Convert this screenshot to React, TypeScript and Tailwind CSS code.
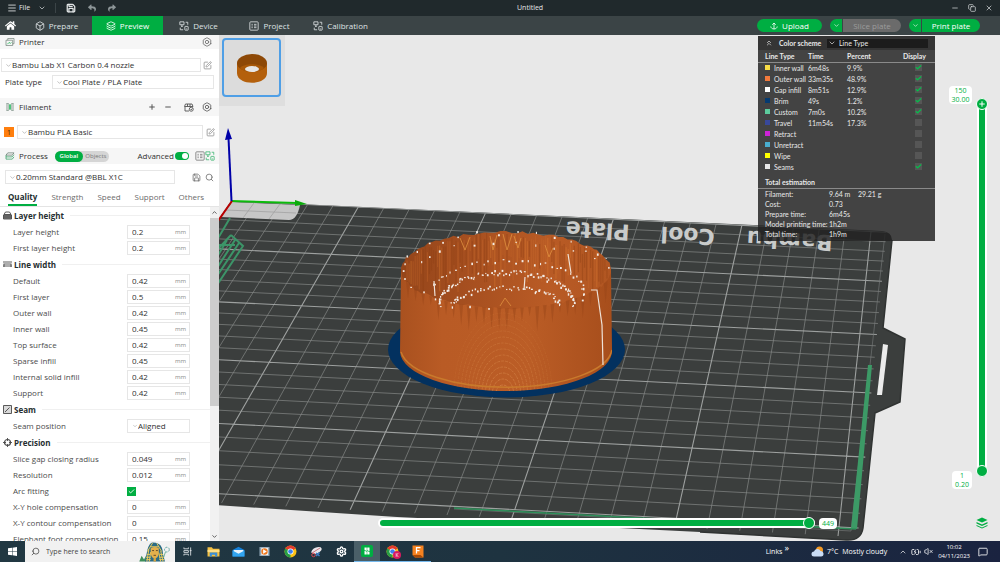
import type { ReactNode } from 'react';
import {
  BatteryCharging,
  Bolt,
  Box,
  Check,
  ChevronDown,
  ChevronsUp,
  ChevronUp,
  Copy,
  Layers,
  Menu,
  MessageSquare,
  Minus,
  Plus,
  Save,
  Search,
  Settings,
  SquarePen,
  VolumeX,
  X,
} from 'lucide-react';
import { FaHome, FaReply, FaShare } from 'react-icons/fa';

type Point = [number, number];

const SECTIONS = [
  { title: 'Layer height', icon: 'layers', rows: [['Layer height', '0.2'], ['First layer height', '0.2']] },
  {
    title: 'Line width',
    icon: 'lines',
    rows: [
      ['Default', '0.42'],
      ['First layer', '0.5'],
      ['Outer wall', '0.42'],
      ['Inner wall', '0.45'],
      ['Top surface', '0.42'],
      ['Sparse infill', '0.45'],
      ['Internal solid infill', '0.42'],
      ['Support', '0.42'],
    ],
  },
  { title: 'Seam', icon: 'seam', rows: [['Seam position', 'Aligned']] },
  {
    title: 'Precision',
    icon: 'precision',
    rows: [
      ['Slice gap closing radius', '0.049'],
      ['Resolution', '0.012'],
      ['Arc fitting', 'on'],
      ['X-Y hole compensation', '0'],
      ['X-Y contour compensation', '0'],
      ['Elephant foot compensation', '0.15'],
    ],
  },
];

const LINE_TYPES = [
  { name: 'Inner wall', color: 'bg-[#f7dc45]', time: '6m48s', percent: '9.9%', shown: true },
  { name: 'Outer wall', color: 'bg-[#f47a3c]', time: '33m35s', percent: '48.9%', shown: true },
  { name: 'Gap infill', color: 'bg-white', time: '8m51s', percent: '12.9%', shown: true },
  { name: 'Brim', color: 'bg-[#053a70]', time: '49s', percent: '1.2%', shown: true },
  { name: 'Custom', color: 'bg-[#5ccb9c]', time: '7m0s', percent: '10.2%', shown: true },
  { name: 'Travel', color: 'bg-[#38489b]', time: '11m54s', percent: '17.3%', shown: false },
  { name: 'Retract', color: 'bg-[#cd22d6]', time: '', percent: '', shown: false },
  { name: 'Unretract', color: 'bg-[#49adcf]', time: '', percent: '', shown: false },
  { name: 'Wipe', color: 'bg-[#ffff00]', time: '', percent: '', shown: false },
  { name: 'Seams', color: 'bg-[#e6e6e6]', time: '', percent: '', shown: true },
];

const TOTALS = [
  ['Filament:', '9.64 m', '29.21 g'],
  ['Cost:', '0.73', ''],
  ['Prepare time:', '6m45s', ''],
  ['Model printing time:', '1h2m', ''],
  ['Total time:', '1h9m', ''],
];

/* ---------- top bars ---------- */

function ListIcon() {
  return (
    <svg viewBox="0 0 24 24" className="size-[10px]" fill="none" stroke="currentColor" strokeWidth="2">
      <rect x="2" y="2" width="20" height="20" rx="2" />
      <path d="M6 8h3M12 8h6M6 12h3M12 12h6M6 16h3M12 16h6" />
    </svg>
  );
}

function DeviceIcon() {
  return (
    <svg viewBox="0 0 24 24" className="size-[10px]" fill="none" stroke="currentColor" strokeWidth="2">
      <path d="M2 2h10v7H2zM5 13h4M7 9v4" />
      <rect x="14" y="13" width="8" height="9" rx="1" />
      <path d="M16 3h5v6M3 16v5h7M17 19h2" />
    </svg>
  );
}

function TitleBar() {
  return (
    <header className="relative flex h-4 shrink-0 items-center bg-[#20292c] px-[7px] text-[#e4e7e8]">
      <button className="flex items-center gap-0.5 text-[7px]">
        <Menu className="size-[10px]" />
        File
      </button>
      <button aria-label="File options" className="ml-2">
        <ChevronDown className="size-2" />
      </button>
      <span className="ml-[9px] h-[10px] w-px bg-[#3b4447]" />
      <button aria-label="Save" className="ml-[10px]">
        <Save className="size-[10px]" strokeWidth={3} />
      </button>
      <button aria-label="Undo" className="ml-3 text-[#8d9698]">
        <FaReply className="size-2" />
      </button>
      <button aria-label="Redo" className="ml-3 text-[#8d9698]">
        <FaShare className="size-2" />
      </button>
      <h1 className="absolute left-1/2 top-0.5 ml-[17px] text-[7px] leading-3">Untitled</h1>
      <div className="ml-auto flex items-center gap-[9px]">
        <button aria-label="Minimize"><Minus className="size-2" /></button>
        <button aria-label="Restore"><Copy className="size-2" /></button>
        <button aria-label="Close"><X className="size-2" /></button>
      </div>
    </header>
  );
}

function NavTab({ label, icon, active }: { label: string; icon: ReactNode; active?: boolean }) {
  return (
    <button
      className={
        active
          ? 'flex w-[71px] items-center justify-center gap-1 bg-[#00ae42] text-white'
          : 'flex w-[71px] items-center justify-center gap-1 text-[#dfe3e4]'
      }
    >
      {icon}
      {label}
    </button>
  );
}

function SplitButton({ label, disabled }: { label: string; disabled?: boolean }) {
  return (
    <div className="flex h-[13px] w-[71px] gap-px overflow-hidden rounded-full">
      <button aria-label={label + ' options'} className="flex w-3 items-center justify-center bg-[#00ae42] text-white">
        <ChevronDown className="size-[7px]" />
      </button>
      <button
        disabled={disabled}
        className={disabled ? 'flex-1 bg-[#6b6b6b] text-[#9c9c9c]' : 'flex-1 bg-[#00ae42] text-white'}
      >
        {label}
      </button>
    </div>
  );
}

function NavBar() {
  return (
    <nav className="flex h-[19px] shrink-0 bg-[#3b4446] text-[8px] leading-3">
      <button aria-label="Home" className="flex w-[21px] items-center justify-center text-white">
        <FaHome className="size-[11px]" />
      </button>
      <NavTab label="Prepare" icon={<Box className="size-[10px]" />} />
      <NavTab label="Preview" icon={<Layers className="size-[10px]" />} active />
      <NavTab label="Device" icon={<DeviceIcon />} />
      <NavTab label="Project" icon={<ListIcon />} />
      <NavTab label="Calibration" icon={<DeviceIcon />} />
      <div className="ml-auto flex items-center gap-2 pr-5">
        <button className="flex h-[13px] w-[65px] items-center justify-center gap-1 rounded-full bg-[#00ae42] text-white">
          <svg viewBox="0 0 16 16" className="size-2" fill="none" stroke="currentColor" strokeWidth="1.6">
            <path d="M8 14V2M4.500 5.500L8 2l3.500 3.500M1.500 9c.5 3 3 5 6.500 5s6-2 6.500-5" />
          </svg>
          Upload
        </button>
        <SplitButton label="Slice plate" disabled />
        <SplitButton label="Print plate" />
      </div>
    </nav>
  );
}

/* ---------- sidebar ---------- */

function Dropdown({ label, value, className }: { label: string; value: string; className: string }) {
  return (
    <div className={'relative flex h-[14px] items-center border border-[#e6e6e6] bg-white ' + className}>
      <ChevronDown className="pointer-events-none absolute left-[3px] size-[7px] text-[#9a9a9a]" />
      <select aria-label={label} className="h-3 w-full appearance-none bg-transparent pl-[10px] text-[8px] leading-3 outline-none">
        <option>{value}</option>
      </select>
    </div>
  );
}

function SectionIcon({ kind }: { kind: string }) {
  return (
    <svg viewBox="0 0 18 18" className="size-[9px] shrink-0" fill="none" stroke="#4a4a4a" strokeWidth="1.8">
      {kind === 'layers' && (
        <>
          <path d="M2 7l3-5h8l3 5z" />
          <path d="M1 8h16v8H1z" fill="#777" />
          <path d="M1 12h16" />
        </>
      )}
      {kind === 'lines' && <path d="M0 4h18M1 8h16M2 8v6M16 8v6M0 12h18" />}
      {kind === 'seam' && (
        <>
          <path d="M1 1h16v16H1z" fill="#d9d9d9" />
          <path d="M4 14L13 5" />
        </>
      )}
      {kind === 'precision' && (
        <>
          <circle cx="9" cy="9" r="6" strokeWidth="2.400" />
          <path d="M9 0v6M9 12v6M0 9h6M12 9h6" />
        </>
      )}
    </svg>
  );
}

function Field({ label, value }: { label: string; value: string }) {
  const id = label.toLowerCase().replace(/\s/g, '-');
  return (
    <div className="flex h-4 items-center pl-[13px]">
      <label htmlFor={id} className="w-[114px] whitespace-nowrap text-[#4c4c4c]">{label}</label>
      {value === 'Aligned' && (
        <div className="relative flex h-[14px] w-[63px] items-center border border-[#e6e6e6]">
          <ChevronDown className="pointer-events-none absolute left-1 size-[6px] text-[#9a9a9a]" />
          <select id={id} className="h-3 w-full appearance-none bg-transparent pl-[10px] text-[8px] leading-3">
            <option>{value}</option>
          </select>
        </div>
      )}
      {value === 'on' && (
        <span className="relative grid size-[9px] place-items-center">
          <input id={id} type="checkbox" defaultChecked className="absolute inset-0 appearance-none bg-[#00ae42]" />
          <Check className="pointer-events-none relative size-[7px] text-white" strokeWidth={3} />
        </span>
      )}
      {value !== 'Aligned' && value !== 'on' && (
        <div className="flex h-[14px] w-[63px] items-center border border-[#e6e6e6] pl-1 pr-[3px]">
          <input id={id} defaultValue={value} className="h-3 w-full min-w-0 text-[8px] leading-3 outline-none" />
          <span className="text-[6px] leading-[10px] text-[#8a8a8a]">mm</span>
        </div>
      )}
    </div>
  );
}

function Sidebar() {
  return (
    <aside className="flex w-[219px] shrink-0 flex-col overflow-hidden bg-white text-[8px] leading-3 text-[#303030]">
      <div className="flex h-[14px] shrink-0 items-center bg-[#f6f6f6] pl-[5px] pr-[7px]">
        <svg viewBox="0 0 20 18" className="mr-1 h-2 w-[10px]" fill="none" stroke="#6f7f76" strokeWidth="1.6">
          <path d="M5 5V1h14v12h-3" />
          <path d="M1 5h15v12H1z" />
          <path d="M4 14l4-4 3 2 2-2" stroke="#00ae42" />
        </svg>
        <h2>Printer</h2>
        <button aria-label="Printer settings" className="ml-auto text-[#6b6b6b]">
          <Bolt className="size-[10px]" />
        </button>
      </div>
      <div className="mt-[9px] flex shrink-0 items-center gap-0.5 pl-px">
        <Dropdown label="Printer preset" value="Bambu Lab X1 Carbon 0.4 nozzle" className="w-[200px]" />
        <button aria-label="Edit printer" className="text-[#8a8a8a]">
          <SquarePen className="size-[9px]" />
        </button>
      </div>
      <div className="mt-[3px] flex shrink-0 items-center pl-[5px]">
        <span className="w-[47px]">Plate type</span>
        <Dropdown label="Plate type" value="Cool Plate / PLA Plate" className="w-[162px]" />
      </div>

      <div className="mt-[9px] flex h-[18px] shrink-0 items-center bg-[#f6f6f6] pl-[5px] pr-[7px]">
        <svg viewBox="0 0 20 18" className="mr-1 h-2 w-[10px]" fill="none" stroke="#7f9388" strokeWidth="1.600">
          <path d="M2 1h5M2 17h5M3 1v16M6 1v16M13 1h5M13 17h5M14 1v16M17 1v16" />
          <path d="M9 3v12M11 3v12" stroke="#00ae42" />
        </svg>
        <h2>Filament</h2>
        <div className="ml-auto flex items-center gap-2 text-[#555]">
          <button aria-label="Add filament"><Plus className="size-2" strokeWidth={3} /></button>
          <button aria-label="Remove filament"><Minus className="size-2" strokeWidth={3} /></button>
          <button aria-label="Sync filament" className="ml-1">
            <svg viewBox="0 0 20 18" className="h-[9px] w-[10px]" fill="none" stroke="currentColor" strokeWidth="1.800">
              <path d="M1 7h17M1 7l2-5h13l2 5M2 7v9h8M7 2v5M12 2v5" />
              <circle cx="14.500" cy="12.500" r="4" />
              <path d="M13 13l1.500 1 2-3" />
            </svg>
          </button>
          <button aria-label="Filament settings"><Bolt className="size-[10px]" /></button>
        </div>
      </div>
      <div className="mt-[9px] flex shrink-0 items-center pl-1">
        <span className="grid size-[10px] place-items-center bg-[#ff7f0e] text-[7px] text-[#4a2a08]">1</span>
        <Dropdown label="Filament preset" value="Bambu PLA Basic" className="ml-[3px] w-[186px]" />
        <button aria-label="Edit filament" className="ml-[3px] text-[#8a8a8a]">
          <SquarePen className="size-[9px]" />
        </button>
      </div>

      <div className="mt-[9px] flex h-4 shrink-0 items-center bg-[#f6f6f6] pl-[5px] pr-1">
        <svg viewBox="0 0 20 18" className="mr-1 h-2 w-[10px]" fill="none" stroke="#5f7468" strokeWidth="1.600">
          <path d="M5 2h14l-4 5H1z" />
          <path d="M1 11h14l4-5M1 16h14l4-5M1 7v9" stroke="#2a9a5a" />
        </svg>
        <h2>Process</h2>
        <div className="ml-[7px] flex h-[11px] w-[54px] items-center rounded-full bg-[#d5d5d5] text-[6px] leading-[11px]">
          <button className="h-[11px] w-[28px] rounded-full bg-[#00ae42] font-semibold text-white">Global</button>
          <button className="flex-1 text-[#777]">Objects</button>
        </div>
        <label htmlFor="advanced" className="ml-auto">Advanced</label>
        <span className="relative ml-px flex h-2 w-[14px] items-center justify-end rounded-full bg-[#00ae42] pr-px">
          <input id="advanced" type="checkbox" role="switch" defaultChecked className="absolute inset-0 appearance-none" />
          <span className="size-[6px] rounded-full bg-white" />
        </span>
        <button aria-label="Parameter list" className="ml-[6px] text-[#777]"><ListIcon /></button>
        <button aria-label="Compare presets" className="text-[#43b876]"><DeviceIcon /></button>
      </div>
      <div className="mt-[6px] flex shrink-0 items-center pl-[5px]">
        <Dropdown label="Process preset" value="0.20mm Standard @BBL X1C" className="w-[170px]" />
        <button aria-label="Save preset" className="ml-[17px] text-[#666]"><Save className="size-[9px]" /></button>
        <button aria-label="Search settings" className="ml-[4px] text-[#666]"><Search className="size-[9px]" /></button>
      </div>
      <div className="mt-[6px] flex h-[17px] shrink-0 gap-[14px] border-b border-[#e4e4e4] px-2 text-[#6b6b6b]">
        <button className="h-4 border-b-2 border-[#00ae42] font-bold text-[#262e30]">Quality</button>
        <button className="h-[14px]">Strength</button>
        <button className="h-[14px]">Speed</button>
        <button className="h-[14px]">Support</button>
        <button className="h-[14px]">Others</button>
      </div>

      <div className="flex min-h-0 flex-1">
        <div className="min-w-0 flex-1 overflow-hidden">
          {SECTIONS.map((section) => (
            <section key={section.title}>
              <div className="flex h-[17px] items-center gap-0.5 pl-[3px]">
                <SectionIcon kind={section.icon} />
                <h3 className="font-bold text-[#262e30]">{section.title}</h3>
                <span className="ml-1 h-px flex-1 bg-[#f0f0f0]" />
              </div>
              {section.rows.map(([label, value]) => (
                <Field key={label} label={label} value={value} />
              ))}
            </section>
          ))}
        </div>
        <div className="flex w-[9px] flex-col items-center bg-[#f1f1f1] text-[#505050]">
          <ChevronUp className="my-0.5 size-[7px]" strokeWidth={3} />
          <span className="h-[188px] w-full bg-[#cdcdcd]" />
          <ChevronDown className="mb-px mt-auto size-[7px]" strokeWidth={3} />
        </div>
      </div>
    </aside>
  );
}

/* ---------- build plate and model ---------- */

// back-left, back-right, front-right and front-left corners of the 250mm grid
const CORNERS: Point[] = [[231.7, 201], [871, 231.5], [839, 527], [36, 484]];

function makeProjection([p0, p1, p2, p3]: Point[]) {
  const dx1 = p1[0] - p2[0];
  const dx2 = p3[0] - p2[0];
  const dy1 = p1[1] - p2[1];
  const dy2 = p3[1] - p2[1];
  const sx = p0[0] - p1[0] + p2[0] - p3[0];
  const sy = p0[1] - p1[1] + p2[1] - p3[1];
  const det = dx1 * dy2 - dx2 * dy1;
  const g = (sx * dy2 - dx2 * sy) / det;
  const h = (dx1 * sy - sx * dy1) / det;
  return (x: number, y: number): Point => {
    const u = x / 250;
    const v = y / 250;
    const w = g * u + h * v + 1;
    return [
      ((p1[0] - p0[0] + g * p1[0]) * u + (p3[0] - p0[0] + h * p3[0]) * v + p0[0]) / w,
      ((p1[1] - p0[1] + g * p1[1]) * u + (p3[1] - p0[1] + h * p3[1]) * v + p0[1]) / w,
    ];
  };
}

const project = makeProjection(CORNERS);

function gridPath(major: boolean) {
  let d = '';
  for (let mm = 0; mm <= 250; mm += 10) {
    if ((mm % 50 === 0) !== major) continue;
    const ends = [project(mm, 0), project(mm, 256), project(0, mm), project(256, mm)];
    d += `M${ends[0]}L${ends[1]}M${ends[2]}L${ends[3]}`;
  }
  return d;
}

// repeatable noise, so the model looks the same on each render
const noise = (n: number) => {
  const s = Math.sin(n * 127.1) * 43758.5453;
  return s - Math.floor(s);
};

function rimPath() {
  let d = '';
  for (let deg = 0; deg < 360; deg += 3) {
    const a = (deg * Math.PI) / 180;
    const x = 506 + 105 * Math.cos(a);
    const y = 270 + 38 * Math.sin(a) + (noise(deg) - 0.5) * 3;
    d += `${deg ? 'L' : 'M'}${x.toFixed(1)},${y.toFixed(1)}`;
  }
  return d + 'Z';
}

function dotArc(cx: number, cy: number, rx: number, ry: number, from: number, to: number, step: number) {
  const dots: Point[] = [];
  for (let deg = from; deg <= to; deg += step) {
    const a = (deg * Math.PI) / 180;
    dots.push([
      cx + rx * Math.cos(a) + (noise(deg + rx) - 0.5) * 3,
      cy + ry * Math.sin(a) + (noise(deg * 2 + rx) - 0.5) * 5,
    ]);
  }
  return dots;
}

const SEAM_DOTS = [
  ...dotArc(506, 303, 67, 31, 178, 362, 2),
  ...dotArc(506, 306, 53, 19, 185, 355, 3),
  ...dotArc(508, 290, 75, 29, 190, 375, 5),
  ...dotArc(508, 264, 88, 22, 190, 350, 14),
  ...dotArc(506, 270, 104, 38, 100, 358, 11),
];

const INNER_STREAKS = Array.from({ length: 100 }, (_, i) => {
  const x = 405 + i * 2.04;
  const edge = 38 * Math.sqrt(Math.max(0, 1 - ((x - 506) / 105) ** 2));
  const top = 270 - edge + noise(i) * 10;
  const bottom = Math.min(268 + edge, top + 10 + noise(i + 40) * 40);
  return { x, top, bottom, tone: noise(i + 90) };
});

const FRONT_TEETH = Array.from({ length: 27 }, (_, i) => {
  const x = 408 + i * 7.600;
  const edge = 38 * Math.sqrt(Math.max(0, 1 - ((x - 506) / 105) ** 2));
  return { x, y: 264 + edge, len: 14 + noise(i + 7) * 18 };
});

const PLATE =
  'M231 201L882 231Q892 232 892 240L883 328L905 339L900 402L875 413L863 528Q861 541 846 540L700 532L397 517L200 504L36 484Z';

function Scene() {
  return (
    <svg
      viewBox="219 35 781 506"
      preserveAspectRatio="xMidYMid slice"
      className="absolute inset-0 size-full"
      role="img"
      aria-label="Sliced model on the build plate"
    >
      <defs>
        <linearGradient id="wall">
          <stop offset="0" stopColor="#a9511f" />
          <stop offset="0.2" stopColor="#b95b25" />
          <stop offset="0.6" stopColor="#bb5d26" />
          <stop offset="1" stopColor="#a74e1c" />
        </linearGradient>
        <linearGradient id="inside">
          <stop offset="0" stopColor="#94451a" />
          <stop offset="0.35" stopColor="#a85020" />
          <stop offset="0.7" stopColor="#b95b25" />
          <stop offset="1" stopColor="#b15622" />
        </linearGradient>
        <clipPath id="plate-clip"><path d={PLATE} /></clipPath>
        <clipPath id="wall-clip">
          <path d="M401 270L400 352A106 40 0 0 0 612 350L611 270A105 38 0 0 1 401 270Z" />
        </clipPath>
      </defs>
      <rect x="-400" y="-300" width="2000" height="1200" fill="#e8e8e8" />
      <path d={PLATE} fill="#3b3e3d" />
      <path d="M892 240L883 328L905 339L900 402L875 413L863 528Q861 541 846 540L700 532" fill="none" stroke="#303332" strokeWidth="1.5" />
      <path d="M883 344L888 345L882 395L877 395Z" fill="#ececec" />
      <g clipPath="url(#plate-clip)" fill="none">
        <path d={gridPath(false)} stroke="#858887" strokeWidth="0.700" />
        <path d={gridPath(true)} stroke="#9da09f" strokeWidth="1.100" />
        <path d="M885 234L851 531L454 509" stroke="#7b7e7d" strokeWidth="0.600" />
      </g>
      <g fill="#c9cbca" fontFamily="DejaVu Sans" fontSize="22" fontWeight="bold" textAnchor="middle">
        <text transform="translate(598 223) rotate(183)">Plate</text>
        <text transform="translate(688 228) rotate(183)">Cool</text>
        <text transform="translate(790 233) rotate(183)">Bambu</text>
      </g>
      {/* purge lines */}
      <g fill="none" stroke="#3c9468" strokeWidth="2">
        <path d="M230 218L217 240M231 235L243 246L217 285M217 250L231 235M235 240L217 268M239 243L217 276M227 240L217 257M217 245L235 245" />
      </g>
      <path d="M868 365L872 365L857 529L851 529Z" fill="#3c9a66" />
      <path d="M454 508L640 518L856 529" fill="none" stroke="#2f8f5a" strokeWidth="1.500" />
      {/* origin */}
      <path d="M232 202L300 205Q297 220 289 220L221 217Z" fill="#c6c6c6" />
      <path d="M226 210L296 213M254 203L243 218M280 204L269 219" stroke="#a2a2a2" strokeWidth="0.800" />
      <path d="M231 201L297 203" stroke="#0cba0c" strokeWidth="2" />
      <path d="M295 200L307 204L295 206Z" fill="#0cab0c" />
      <path d="M232 201L218 221" stroke="#b80000" strokeWidth="2" />
      <path d="M231.500 201L228.500 138" stroke="#0000a8" strokeWidth="2" />
      <path d="M225 140L228 128L232 139Z" fill="#0000a8" />

      {/* model */}
      <ellipse cx="506.500" cy="349.500" rx="118.500" ry="48" fill="#03315f" />
      <path d="M401 270L400 352A106 40 0 0 0 612 350L611 270Z" fill="url(#wall)" />
      <path d={rimPath()} fill="url(#inside)" />
      {INNER_STREAKS.map((s) => (
        <path
          key={s.x}
          d={`M${s.x} ${s.top}V${s.bottom}`}
          stroke={s.tone > 0.8 ? '#d97a30' : s.tone > 0.4 ? '#8f4014' : '#c4662a'}
          strokeWidth="1.200"
          opacity="0.400"
        />
      ))}
      <g clipPath="url(#wall-clip)">
        {FRONT_TEETH.map((t) => (
          <path key={t.x} d={`M${t.x - 2.5} ${t.y}L${t.x} ${t.y + t.len}L${t.x + 2.5} ${t.y}Z`} fill="#964418" opacity="0.450" />
        ))}
        {Array.from({ length: 13 }, (_, i) => (
          <ellipse
            key={i}
            cx="503"
            cy="393"
            rx={7 + i * 3.500}
            ry={8 + i * 6}
            fill="none"
            stroke="#dc9052"
            strokeWidth="0.800"
            strokeDasharray="3 1"
            opacity={0.7 - i * 0.045}
          />
        ))}
        <path d="M401 352A106 40 0 0 0 612 350" fill="none" stroke="#c97a2c" strokeWidth="1.500" />
      </g>
      <path d="M460 238l5 12 5-13M490 236l3 14 4-15M503 234l4 16 5-16M514 236l4 12 3-10M545 245l4 12 4-9M500 306l5-8 6 8" fill="none" stroke="#e09040" strokeWidth="0.800" />
      <g fill="#f3ece6">
        {SEAM_DOTS.map(([x, y], i) => (
          <rect key={i} x={x} y={y} width={1 + noise(i + 3)} height={1 + noise(i) * 1.500} />
        ))}
      </g>
      <path d="M568 254L571 273M525 277L524 290M434 281L435 296" stroke="#eee2d8" strokeWidth="1.200" />
      <path d="M591 290L597 290L602 325L603 365" fill="none" stroke="#eee2d8" strokeWidth="1.200" />
    </svg>
  );
}

/* ---------- viewport overlays ---------- */

function PlateThumbnail() {
  return (
    <div className="absolute left-0 top-0 h-[71px] w-[66px] bg-[#dedede] p-[3px]">
      <button aria-label="Plate 1" className="grid h-[59px] w-[59px] place-items-center rounded-sm border-2 border-[#4f9fe6] bg-[#dcdcdc]">
        <svg viewBox="0 0 32 32" className="size-8">
          <path d="M1 11v10c0 13 30 13 30 0V11z" fill="#b4600c" />
          <ellipse cx="16" cy="11" rx="15" ry="9" fill="#8d4806" />
          <path d="M4 16c4-5 20-5 24 0-4 5-20 5-24 0z" fill="#a85808" />
          <ellipse cx="16" cy="17" rx="7" ry="3" fill="#e6e6e6" />
        </svg>
      </button>
    </div>
  );
}

function LegendPanel() {
  return (
    <section className="absolute right-[65px] top-px w-[177px] bg-[#222222]/83 pb-0.5 font-[Lato,sans-serif] text-[7px] leading-[10px] text-[#e8e8e8]">
      <div className="flex h-[14px] items-center bg-black/20 px-[7px]">
        <button aria-label="Collapse"><ChevronsUp className="size-2" /></button>
        <label htmlFor="scheme" className="ml-[6px] font-bold">Color scheme</label>
        <div className="relative ml-auto flex h-[9px] w-[101px] items-center bg-[#1c1c1c]">
          <ChevronDown className="pointer-events-none absolute left-px size-2" />
          <select id="scheme" className="h-[9px] w-full appearance-none bg-transparent pl-3 text-[7px] leading-[9px]">
            <option>Line Type</option>
          </select>
        </div>
      </div>
      <table className="w-full table-fixed">
        <thead>
          <tr className="h-[12px] border-b border-[#8a8a8a] text-left">
            <th className="w-[50px] pl-[7px]">Line Type</th>
            <th className="w-[39px]">Time</th>
            <th className="w-[56px]">Percent</th>
            <th>Display</th>
          </tr>
        </thead>
        <tbody>
          {LINE_TYPES.map((row) => (
            <tr key={row.name} className="h-[11px]">
              <td className="pl-[7px]">
                <span className="flex items-center gap-1 whitespace-nowrap">
                  <span className={'size-[5px] shrink-0 ' + row.color} />
                  {row.name}
                </span>
              </td>
              <td>{row.time}</td>
              <td>{row.percent}</td>
              <td>
                <span className="relative ml-3 grid size-[7px] place-items-center">
                  <input
                    type="checkbox"
                    aria-label={'Display ' + row.name}
                    defaultChecked={row.shown}
                    className="absolute inset-0 appearance-none bg-[#565656]"
                  />
                  {row.shown && <Check className="pointer-events-none relative size-[7px] text-[#00c24a]" strokeWidth={4} />}
                </span>
              </td>
            </tr>
          ))}
        </tbody>
      </table>
      <h2 className="mt-[5px] border-b border-[#8a8a8a] pl-[7px] font-bold leading-[11px]">Total estimation</h2>
      <dl className="pl-[7px]">
        {TOTALS.map(([name, value, extra]) => (
          <div key={name} className="flex">
            <dt className="w-[64px] whitespace-nowrap">{name}</dt>
            <dd className="w-[29px]">{value}</dd>
            <dd>{extra}</dd>
          </div>
        ))}
      </dl>
    </section>
  );
}

function LayerSlider() {
  const thumb =
    'pointer-events-none absolute inset-0 h-full w-3 appearance-none bg-transparent [direction:rtl] [writing-mode:vertical-lr] [&::-webkit-slider-thumb]:pointer-events-auto [&::-webkit-slider-thumb]:size-3 [&::-webkit-slider-thumb]:appearance-none [&::-webkit-slider-thumb]:rounded-full [&::-webkit-slider-thumb]:border [&::-webkit-slider-thumb]:border-white [&::-webkit-slider-thumb]:bg-[#00ae42]';
  return (
    <div className="absolute bottom-[64px] right-3 top-[63px] w-3">
      <div className="mx-auto h-full w-[10px] rounded-full bg-white px-0.5">
        <div className="h-full rounded-full bg-[#00ae42]" />
      </div>
      <input type="range" aria-label="Top layer" min={1} max={150} defaultValue={150} className={thumb} />
      <input type="range" aria-label="Bottom layer" min={1} max={150} defaultValue={1} className={thumb} />
      <Plus className="pointer-events-none absolute left-0.5 top-0.5 size-2 text-white" strokeWidth={3} />
      <output className="absolute -top-3 right-4 w-[23px] rounded-sm bg-white text-center text-[7px] leading-[9px] text-[#00ae42]">
        150
        <br />
        30.00
      </output>
      <output className="absolute -bottom-3 right-4 w-5 rounded-sm bg-white text-center text-[7px] leading-[9px] text-[#00ae42]">
        1
        <br />
        0.20
      </output>
    </div>
  );
}

function MoveSlider() {
  return (
    <div className="absolute bottom-3 left-[159px] right-[163px] flex items-center">
      <div className="relative flex h-3 flex-1 items-center">
        <div className="h-[10px] w-full rounded-full bg-white p-0.5">
          <div className="h-full rounded-full bg-[#00ae42]" />
        </div>
        <input
          type="range"
          aria-label="Move"
          min={1}
          max={449}
          defaultValue={449}
          className="absolute inset-0 h-3 w-full appearance-none bg-transparent [&::-webkit-slider-thumb]:size-3 [&::-webkit-slider-thumb]:appearance-none [&::-webkit-slider-thumb]:rounded-full [&::-webkit-slider-thumb]:border [&::-webkit-slider-thumb]:border-white [&::-webkit-slider-thumb]:bg-[#00ae42]"
        />
      </div>
      <output className="ml-1 w-[18px] rounded-sm bg-white text-center text-[7px] leading-[11px] text-[#00ae42]">449</output>
    </div>
  );
}

function Viewport() {
  return (
    <main className="relative min-w-0 flex-1 overflow-hidden bg-[#e8e8e8]">
      <Scene />
      <PlateThumbnail />
      <LegendPanel />
      <LayerSlider />
      <MoveSlider />
      <button aria-label="Layer view" className="absolute bottom-3 right-3 text-[#00ae42]">
        <svg viewBox="0 0 24 24" className="size-3" fill="currentColor">
          <path d="M12 1l11 5-11 5L1 6z" />
          <path d="M1 10l11 5 11-5v3l-11 5-11-5zM1 16l11 5 11-5v2l-11 5-11-5z" />
        </svg>
      </button>
    </main>
  );
}

/* ---------- windows taskbar ---------- */

function ChromeLogo() {
  return (
    <svg viewBox="0 0 24 24" className="size-[13px]">
      <circle cx="12" cy="12" r="11" fill="#fbc116" />
      <path d="M12 12L2.500 6.500A11 11 0 0 1 21.500 6.500Z" fill="#e33b2e" />
      <path d="M12 12L2.500 6.500A11 11 0 0 0 12 23Z" fill="#269e46" />
      <circle cx="12" cy="12" r="5.500" fill="#fff" />
      <circle cx="12" cy="12" r="4.300" fill="#3c7ff0" />
    </svg>
  );
}

const TASKS: { name: string; icon: ReactNode; state?: 'open' | 'active' }[] = [
  {
    name: 'Task view',
    icon: (
      <svg viewBox="0 0 20 20" className="size-[9px]" fill="none" stroke="#e8edef" strokeWidth="1.800">
        <path d="M2 1v3h10V1M2 8h10v4H2zM2 19v-3h10v3M17 1v18M15 8h4" />
      </svg>
    ),
  },
  {
    name: 'File Explorer',
    icon: (
      <svg viewBox="0 0 24 20" className="h-[11px] w-[13px]">
        <path d="M1 2h8l2 3h12v14H1z" fill="#f5c142" />
        <path d="M1 7h22v4H1z" fill="#fde08a" />
        <path d="M5 12h14v7h-4v-3H9v3H5z" fill="#3a8fd8" />
      </svg>
    ),
  },
  {
    name: 'Mail',
    icon: (
      <svg viewBox="0 0 24 20" className="h-[11px] w-[13px]">
        <path d="M1 7l11-6 11 6v12H1z" fill="#1681d8" />
        <path d="M3 7h18v4l-9 5-9-5z" fill="#e9f4fd" />
        <path d="M1 8l11 6 11-6v11H1z" fill="#32a5f0" />
      </svg>
    ),
  },
  {
    name: 'Media Player',
    icon: (
      <svg viewBox="0 0 24 24" className="size-[11px]">
        <rect x="1" y="2" width="22" height="20" rx="1" fill="#8fa4b5" />
        <rect x="5" y="4" width="15" height="16" fill="#f4f4f4" />
        <circle cx="12" cy="12" r="7" fill="#ef7a22" />
        <path d="M9 7l8 5-8 5z" fill="#fff" />
      </svg>
    ),
  },
  { name: 'Chrome', icon: <ChromeLogo /> },
  {
    name: 'Snipping Tool',
    icon: (
      <svg viewBox="0 0 24 24" className="size-3">
        <ellipse cx="13" cy="9" rx="11" ry="6" transform="rotate(-25 13 9)" fill="#e9e6ea" />
        <path d="M4 14L20 4" stroke="#c2505c" strokeWidth="1.500" />
        <circle cx="7" cy="18" r="3.500" fill="none" stroke="#d8434e" strokeWidth="2" />
        <path d="M12 14l7 6M19 13l-7 7" stroke="#3f7fc4" strokeWidth="3" />
      </svg>
    ),
  },
  { name: 'Settings', icon: <Settings className="size-[11px] text-white" strokeWidth={3} /> },
  {
    name: 'Bambu Studio',
    state: 'active',
    icon: (
      <svg viewBox="0 0 24 24" className="size-3">
        <rect width="24" height="24" rx="4" fill="#00ae42" />
        <path d="M7 5h4.500v7L7 10zM7 11.500l4.500 2V19H7zM12.500 5H17v7.500l-4.500-2zM12.500 12l4.500 2v5h-4.500z" fill="#fff" />
      </svg>
    ),
  },
  {
    name: 'Chrome profile',
    state: 'open',
    icon: (
      <span className="relative">
        <ChromeLogo />
        <span className="absolute -bottom-px -right-0.5 size-2 rounded-full bg-[#d81b60] text-center text-[5px] leading-2 text-white">K</span>
      </span>
    ),
  },
  {
    name: 'Fusion',
    state: 'open',
    icon: (
      <svg viewBox="0 0 24 26" className="h-[13px] w-3">
        <path d="M1 1h22v24H6l-5-5z" fill="#f58220" />
        <path d="M1 20h16l6 5H6z" fill="#a94a06" />
        <path d="M9 17V5h8M9 11h6" fill="none" stroke="#fff" strokeWidth="2.500" />
      </svg>
    ),
  },
];

function Taskbar() {
  return (
    <footer className="flex h-[21px] shrink-0 items-stretch bg-linear-to-r from-[#213842] via-[#1e3340] to-[#1a2340] text-[7px] leading-[10px] text-white">
      <button aria-label="Start" className="flex w-[25px] items-center justify-center">
        <svg viewBox="0 0 18 18" className="size-[9px]" fill="#fff">
          <path d="M0 2.500L8 1.500V8.500H0zM9 1.300L18 0V8.500H9zM0 9.500H8v7L0 15.500zM9 9.500h9V18L9 16.700z" />
        </svg>
      </button>
      <label className="flex w-[150px] items-center bg-[#f1f1f1] pl-[6px] text-[#444]">
        <Search className="size-[9px] -scale-x-100" />
        <input
          aria-label="Search"
          placeholder="Type here to search"
          className="ml-[6px] w-[92px] text-[7px] placeholder:text-[#444] placeholder:opacity-100"
        />
        <svg viewBox="0 0 66 42" className="h-5 w-[33px]">
          <path d="M1 41l5-12 5 8 4-8v12z" fill="#3f8f5a" />
          <path d="M13 41l5-24Q22 1 29 1t13 3q8 4 9 22l4 15z" fill="#2b6c86" />
          <path d="M17 41l4-25M22 41l3-20M46 19l5 22M42 22l4 19M18 20l11-18M48 20L38 3M24 10h18M15 32h10M43 32h10M16 37h9M43 37h10M17 26h7M44 26h7" stroke="#f0cc58" strokeWidth="2" />
          <path d="M25 13q9-5 17 0v12q-2 9-8.500 9T25 25z" fill="#e3b04c" />
          <path d="M28 18h4M36 18h4M31 28h5" stroke="#35251a" strokeWidth="1.500" />
          <path d="M31 33h5v8h-5z" fill="#d7a33e" />
          <circle cx="59" cy="16" r="5" fill="none" stroke="#2a8c86" strokeWidth="1.500" strokeDasharray="4 2" />
          <path d="M56 21l-4 12" stroke="#3c9a74" strokeWidth="1.500" />
        </svg>
      </label>
      <div className="grid w-64 grid-cols-10">
        {TASKS.map((task) => (
          <button
            key={task.name}
            aria-label={task.name}
            className={
              task.state === 'active'
                ? 'flex items-center justify-center border-b border-[#76b9ed] bg-[#4a5f68]'
                : task.state === 'open'
                  ? 'flex items-center justify-center border-b border-[#76b9ed]'
                  : 'flex items-center justify-center'
            }
          >
            {task.icon}
          </button>
        ))}
      </div>
      <div className="ml-auto flex items-center">
        <span>Links</span>
        <span className="mb-2 ml-0.5 text-[9px]">»</span>
        <button className="ml-[22px] flex items-center whitespace-nowrap">
          <svg viewBox="0 0 26 22" className="mr-[3px] h-[11px] w-[13px]">
            <circle cx="17" cy="8" r="7" fill="#f59a23" />
            <path d="M6 21a5 5 0 0 1 0-10 7 7 0 0 1 13-1 5.500 5.500 0 0 1 1 11z" fill="#c9dcf5" />
          </svg>
          <span className="mr-1">7°C</span>
          <span>Mostly cloudy</span>
        </button>
        <ChevronUp className="ml-3 size-2" />
        <BatteryCharging className="ml-1 size-[10px]" />
        <VolumeX className="ml-[3px] size-[9px]" />
        <div className="ml-[5px] text-center text-[6px] leading-[9px]">
          <div>10:02</div>
          <div>04/11/2023</div>
        </div>
        <button aria-label="Notifications" className="ml-2 mr-3"><MessageSquare className="size-[10px]" /></button>
      </div>
    </footer>
  );
}

export default function App() {
  return (
    <div className="flex h-screen flex-col overflow-hidden font-['Open_Sans',sans-serif]">
      <TitleBar />
      <NavBar />
      <div className="flex min-h-0 flex-1">
        <Sidebar />
        <Viewport />
      </div>
      <Taskbar />
    </div>
  );
}
